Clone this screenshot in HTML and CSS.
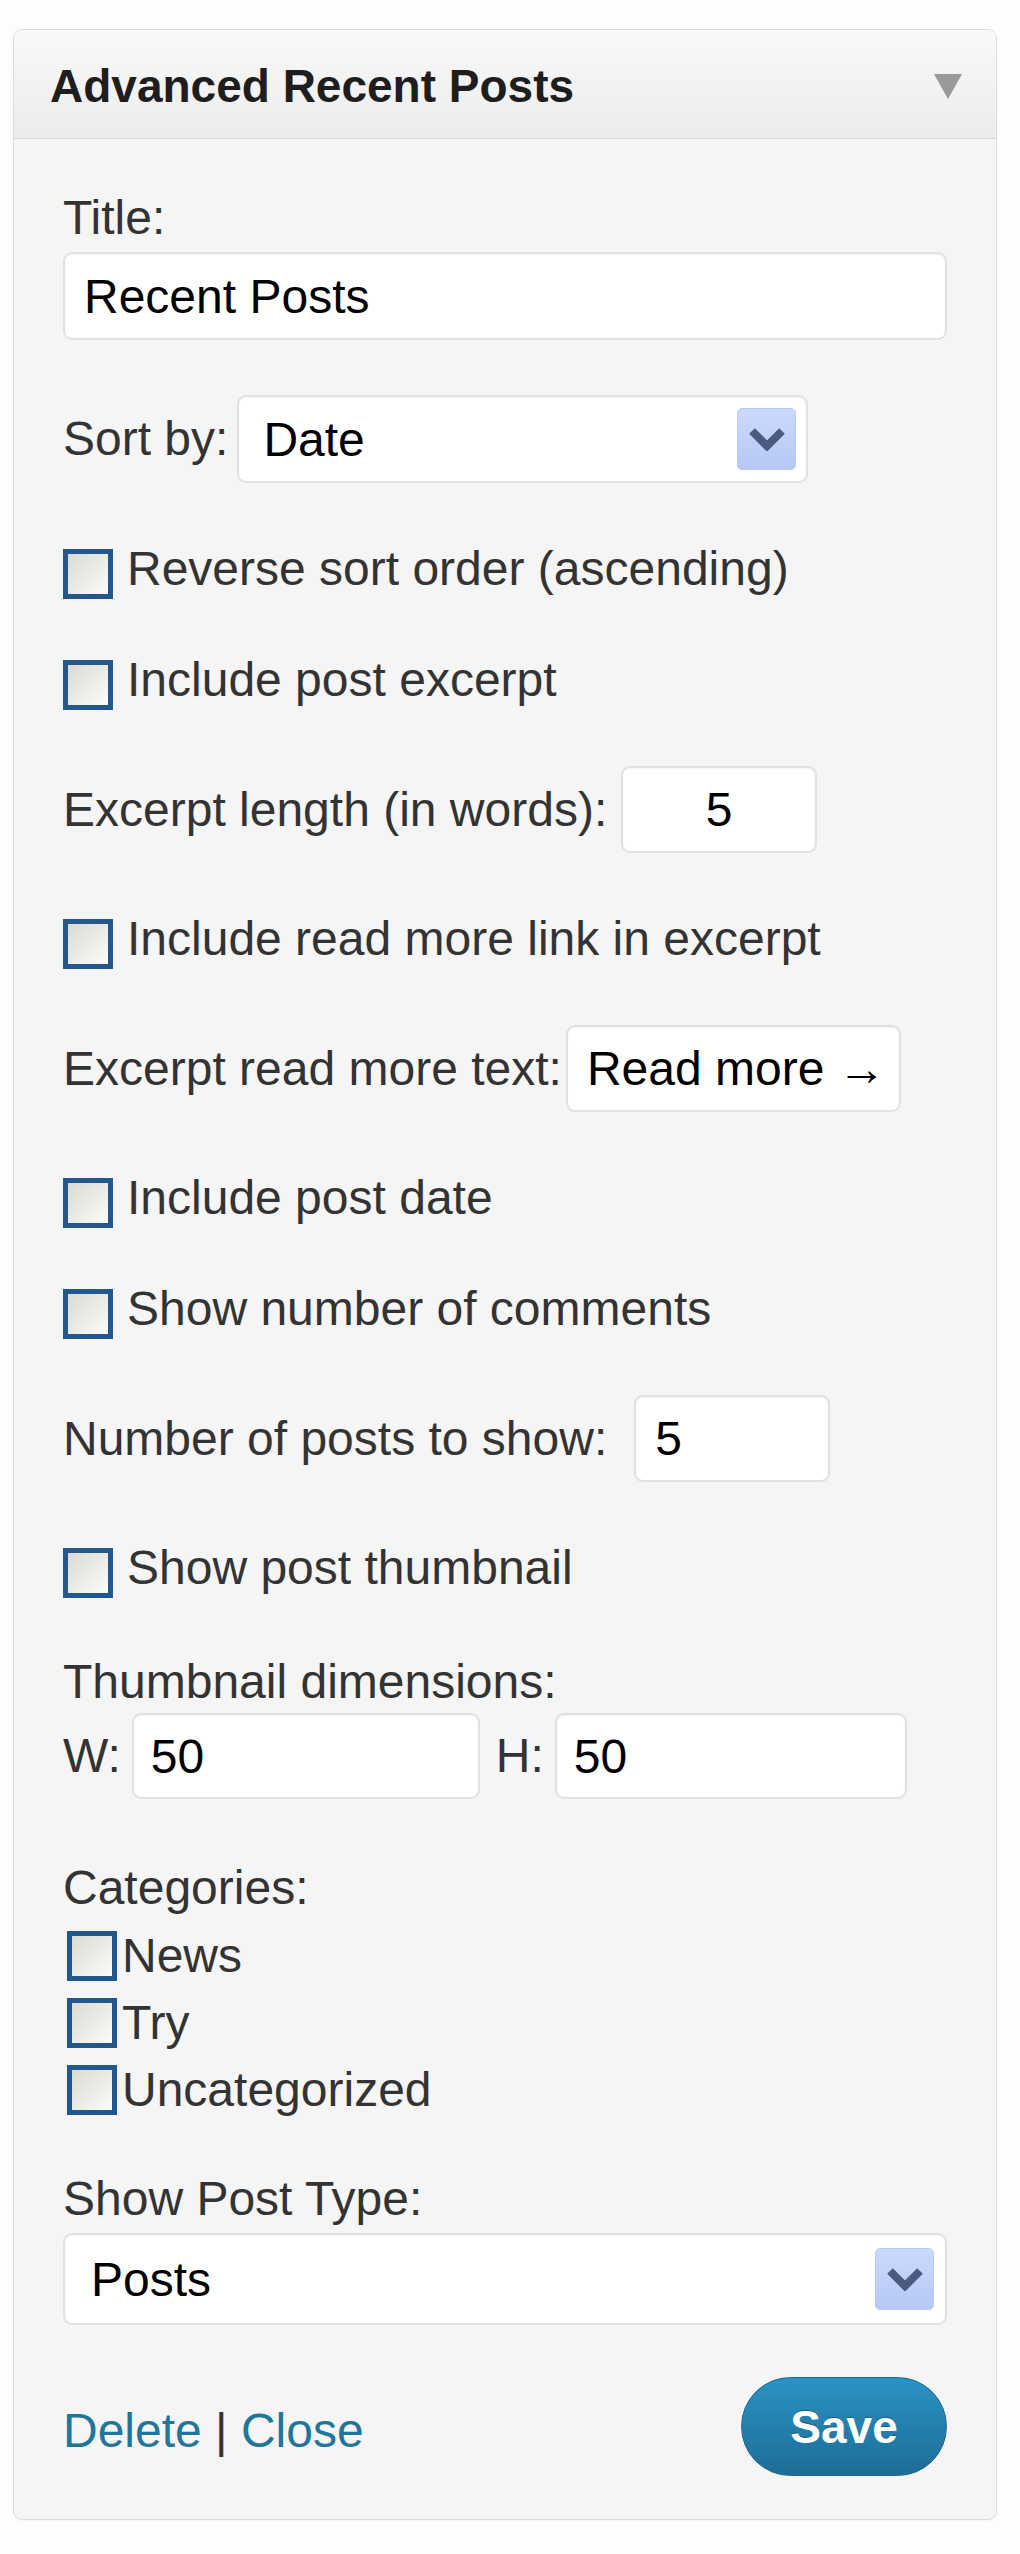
FILE: index.html
```html
<!DOCTYPE html>
<html lang="en">
<head>
<meta charset="utf-8">
<title>Advanced Recent Posts</title>
<link rel="stylesheet" href="styles.css">
</head>
<body>
<div class="page">
  <div class="widget">
    <div class="widget-top">
      <h3 class="widget-title">Advanced Recent Posts</h3>
      <span class="toggle"></span>
    </div>
    <div class="widget-inside">
      <div class="block">
        <div class="label">Title:</div>
        <div class="field wide"><span class="value">Recent Posts</span></div>
      </div>

      <div class="row field-row sort-row">
        <span class="label">Sort by:</span>
        <div class="select sort-select">
          <span class="value">Date</span>
          <span class="arrow"><svg width="38" height="24" viewBox="0 0 38 24"><polyline points="4,4 19,19 34,4" fill="none" stroke="#4a5b7e" stroke-width="8" stroke-linejoin="miter"/></svg></span>
        </div>
      </div>

      <div class="row check"><span class="cb"></span><span class="text">Reverse sort order (ascending)</span></div>
      <div class="row check"><span class="cb"></span><span class="text">Include post excerpt</span></div>

      <div class="row field-row">
        <span class="label">Excerpt length (in words):</span>
        <div class="field small center"><span class="value">5</span></div>
      </div>

      <div class="row check"><span class="cb"></span><span class="text">Include read more link in excerpt</span></div>

      <div class="row field-row more-row">
        <span class="label">Excerpt read more text:</span>
        <div class="field more"><span class="value">Read more →</span></div>
      </div>

      <div class="row check"><span class="cb"></span><span class="text">Include post date</span></div>
      <div class="row check"><span class="cb"></span><span class="text">Show number of comments</span></div>

      <div class="row field-row count-row">
        <span class="label">Number of posts to show:</span>
        <div class="field small"><span class="value">5</span></div>
      </div>

      <div class="row check"><span class="cb"></span><span class="text">Show post thumbnail</span></div>

      <div class="row block">
        <div class="label">Thumbnail dimensions:</div>
        <div class="dims">
          <span class="label">W:</span>
          <div class="field dim-w"><span class="value">50</span></div>
          <span class="label h-label">H:</span>
          <div class="field dim-h"><span class="value">50</span></div>
        </div>
      </div>

      <div class="row block">
        <div class="label">Categories:</div>
        <ul class="cats">
          <li><span class="cb"></span><span class="text">News</span></li>
          <li><span class="cb"></span><span class="text">Try</span></li>
          <li><span class="cb"></span><span class="text">Uncategorized</span></li>
        </ul>
      </div>

      <div class="block type-block">
        <div class="label">Show Post Type:</div>
        <div class="select wide type-select">
          <span class="value">Posts</span>
          <span class="arrow"><svg width="38" height="24" viewBox="0 0 38 24"><polyline points="4,4 19,19 34,4" fill="none" stroke="#4a5b7e" stroke-width="8" stroke-linejoin="miter"/></svg></span>
        </div>
      </div>

      <div class="footer">
        <div class="links"><a class="link" href="#">Delete</a> <span class="sep">|</span> <a class="link" href="#">Close</a></div>
        <span class="save">Save</span>
      </div>
    </div>
  </div>
</div>
</body>
</html>
```
FILE: styles.css
```css
* { box-sizing: border-box; }

body {
  margin: 0;
  background: #fdfdfd;
  font-family: "Liberation Sans", Arial, sans-serif;
  color: #333;
}

.page {
  padding: 29px 23px 38px 13px;
}

.widget {
  width: 984px;
  border: 1px solid #dcdcdc;
  border-radius: 9px;
  background: #f5f5f5;
  box-shadow: 0 1px 2px rgba(0, 0, 0, 0.04);
}

.widget-top {
  height: 109px;
  display: flex;
  align-items: center;
  padding: 4px 34px 0 36px;
  border-bottom: 1px solid #dadada;
  border-radius: 8px 8px 0 0;
  background: linear-gradient(#f9f9f9, #ececec);
}

.widget-title {
  margin: 0;
  font-size: 46px;
  font-weight: bold;
  color: #1e1e1e;
}

.toggle {
  margin-left: auto;
  width: 0;
  height: 0;
  border-left: 14px solid transparent;
  border-right: 14px solid transparent;
  border-top: 25px solid #999;
}

.widget-inside {
  padding: 51px 49px 43px 49px;
  font-size: 48px;
}

.label {
  line-height: 56px;
  white-space: nowrap;
}

.field,
.select {
  background: #fff;
  border: 2px solid #e1e1e1;
  border-radius: 9px;
  box-shadow: inset 0 1px 2px rgba(0, 0, 0, 0.05);
  color: #000;
  display: flex;
  align-items: center;
  height: 87px;
  padding-left: 19px;
  white-space: nowrap;
}

.block > .field,
.block > .select {
  margin-top: 6px;
}

.wide { width: 100%; height: 88px; }

.row { margin-top: 61px; }
.sort-row { margin-top: 55px; }

.field-row {
  display: flex;
  align-items: center;
  gap: 14px;
}

.sort-row { gap: 9px; }
.more-row { gap: 4px; }
.count-row { gap: 27px; }

.select {
  justify-content: space-between;
  padding-left: 24px;
  padding-right: 10px;
}

.sort-select { width: 571px; height: 88px; }

.arrow {
  width: 59px;
  height: 62px;
  border: 1px solid #b7c8f3;
  border-radius: 5px;
  background: linear-gradient(#cbd9fd, #b6c8f6);
  display: flex;
  align-items: center;
  justify-content: center;
}

.small { width: 196px; }
.center { justify-content: center; padding-left: 0; }
.more { width: 335px; }

.check {
  display: flex;
  align-items: center;
  height: 50px;
}

.check .text { line-height: 54px; margin-left: 14px; white-space: nowrap; }

.cb {
  flex: none;
  width: 50px;
  height: 50px;
  border: 5px solid #22588e;
  background: linear-gradient(135deg, #dbdbd3, #fbfbf9);
}

.check .cb {
  align-self: flex-start;
  margin-top: 5px;
  margin-bottom: -5px;
}

.dims {
  display: flex;
  align-items: center;
  gap: 11px;
  margin-top: 3px;
}

.dims .field { height: 86px; padding-left: 17px; }
.dim-w { width: 348px; }
.dim-h { width: 352px; }
.h-label { margin-left: 5px; }

.cats {
  list-style: none;
  margin: 6px 0 0;
  padding: 0;
}

.cats li {
  display: flex;
  align-items: center;
  height: 67px;
}

.cats .cb { margin-left: 4px; }
.cats .text { margin-left: 5px; line-height: 56px; }

.type-block { margin-top: 48px; }
.type-block .label { line-height: 56px; }
.type-select { margin-top: 2px; height: 92px; padding-left: 26px; padding-right: 11px; }

.footer {
  margin-top: 52px;
  display: flex;
  align-items: center;
  justify-content: space-between;
}

.links { padding-top: 8px; white-space: nowrap; }

.link {
  color: #21759b;
  text-decoration: none;
}

.sep { color: #333; }

.save {
  width: 206px;
  height: 99px;
  border-radius: 50px;
  border: 1px solid #1d6a91;
  background: linear-gradient(#2a92c5, #1e6d96);
  color: #fff;
  font-weight: bold;
  font-size: 46px;
  display: flex;
  align-items: center;
  justify-content: center;
  text-shadow: 0 -1px 0 rgba(0, 0, 0, 0.3);
}
```
